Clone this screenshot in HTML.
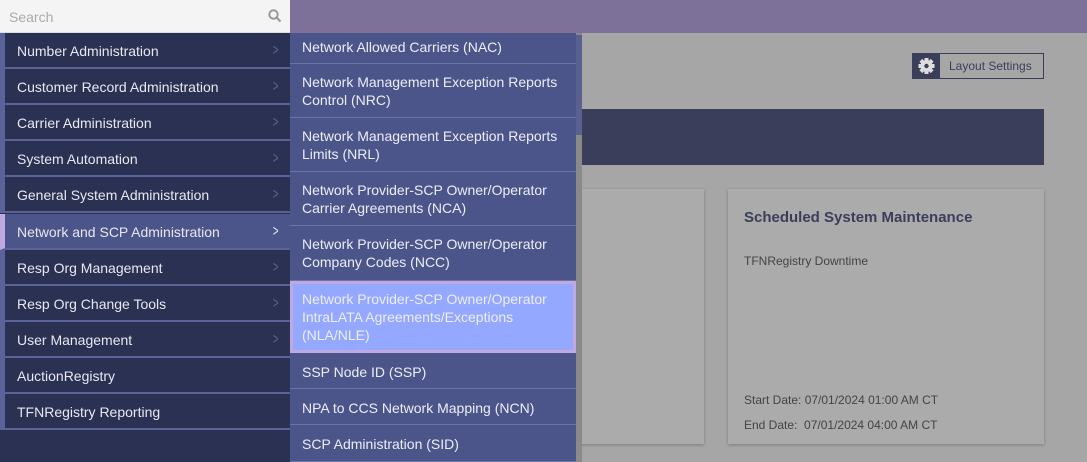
<!DOCTYPE html>
<html><head><style>
*{margin:0;padding:0;box-sizing:border-box}
body{width:1087px;height:462px;overflow:hidden;background:#a6a6a6;font-family:"Liberation Sans",sans-serif;position:relative}
.top{position:absolute;left:290px;top:0;width:797px;height:33px;background:#7e7199}
.search{position:absolute;left:0;top:0;width:290px;height:33px;background:#f4f4f4;border-bottom:1px solid #ddd}
.search span{position:absolute;left:9px;top:9px;font-size:14px;color:#aaa}
.left{position:absolute;left:0;top:33px;width:290px;height:429px;background:#2a3152}
.li{position:absolute;left:0;width:290px;height:36px;border-bottom:2px solid #5a6399;background:#2a3152;border-left:5px solid #5a6399;color:#e8e8f0;font-size:14px;padding:10px 0 0 12px}
.li.act{background:#4b5589;border-left-color:#c0a8e0}
.li i{position:absolute;right:10px;top:9px;font-style:normal;color:#5a6399;font-size:16px;transform:scaleX(.6)}
.li.act i{color:#e8e8f0}
.sub{position:absolute;left:290px;top:33px;width:286px;height:429px;background:#4b5589}
.si{position:absolute;left:0;width:286px;border-bottom:1px solid #6a74a8;color:#eceef6;font-size:14px;line-height:18px;padding:0 12px}
.si.hl{background:#94a8ff;border:3px solid #c0a8e0}
.sb{position:absolute;left:576px;top:33px;width:6px;height:429px;background:#8a8a8a}
.sb div{position:absolute;top:2px;left:0;width:6px;height:100px;background:#5a6090}
.btn{position:absolute;left:912px;top:53px;width:132px;height:26px;border:1px solid #3b3e5a}
.btn .ic{position:absolute;left:0;top:0;width:27px;height:24px;background:#3b3e5a}
.btn span{position:absolute;left:36px;top:5px;font-size:12px;color:#3b3e5a}
.banner{position:absolute;left:582px;top:109px;width:462px;height:56px;background:#3b3e5a}
.card{position:absolute;top:189px;height:255px;background:#ababab;box-shadow:0 1px 3px rgba(0,0,0,.25)}
</style></head><body>
<div class="top"></div>
<div class="banner"></div>
<div class="card" style="left:560px;width:144px"></div>
<div class="card" style="left:728px;width:316px">
<div style="position:absolute;left:16px;top:20px;font-size:15px;font-weight:bold;color:#3b3e5a">Scheduled System Maintenance</div>
<div style="position:absolute;left:16px;top:65px;font-size:12px;color:#444">TFNRegistry Downtime</div>
<div style="position:absolute;left:16px;top:204px;font-size:12px;color:#444">Start Date: 07/01/2024 01:00 AM CT</div>
<div style="position:absolute;left:16px;top:229px;font-size:12px;color:#444">End Date:&nbsp; 07/01/2024 04:00 AM CT</div>
</div>
<div class="btn"><div class="ic"><svg width="27" height="24" viewBox="0 0 27 24"><g fill="#ddd" transform="translate(13.5 12)"><circle r="6"/><rect x="-2" y="-8" width="4" height="16"/><rect x="-8" y="-2" width="16" height="4"/><rect x="-2" y="-8" width="4" height="16" transform="rotate(45)"/><rect x="-2" y="-8" width="4" height="16" transform="rotate(-45)"/></g><circle cx="13.5" cy="12" r="2.2" fill="#3b3e5a"/></svg></div><span>Layout Settings</span></div>
<div class="search"><span>Search</span><svg style="position:absolute;left:268px;top:9px" width="14" height="14" viewBox="0 0 14 14"><circle cx="5.5" cy="5.5" r="4.2" fill="none" stroke="#999" stroke-width="2"/><path d="M8.5 8.5L12.5 12.5" stroke="#999" stroke-width="2.2"/></svg></div>
<div class="left">
<div class="li" style="top:0">Number Administration<i>&gt;</i></div>
<div class="li" style="top:36px">Customer Record Administration<i>&gt;</i></div>
<div class="li" style="top:72px">Carrier Administration<i>&gt;</i></div>
<div class="li" style="top:108px">System Automation<i>&gt;</i></div>
<div class="li" style="top:144px">General System Administration<i>&gt;</i></div>
<div class="li act" style="top:181px">Network and SCP Administration<i>&gt;</i></div>
<div class="li" style="top:217px">Resp Org Management<i>&gt;</i></div>
<div class="li" style="top:253px">Resp Org Change Tools<i>&gt;</i></div>
<div class="li" style="top:289px">User Management<i>&gt;</i></div>
<div class="li" style="top:325px">AuctionRegistry</div>
<div class="li" style="top:361px">TFNRegistry Reporting</div>
</div>
<div class="sub">
<div class="si" style="top:0;height:31px;padding-top:5px">Network Allowed Carriers (NAC)</div>
<div class="si" style="top:31px;height:54px;padding-top:9px">Network Management Exception Reports Control (NRC)</div>
<div class="si" style="top:85px;height:54px;padding-top:9px">Network Management Exception Reports Limits (NRL)</div>
<div class="si" style="top:139px;height:54px;padding-top:9px">Network Provider-SCP Owner/Operator Carrier Agreements (NCA)</div>
<div class="si" style="top:193px;height:55px;padding-top:9px">Network Provider-SCP Owner/Operator Company Codes (NCC)</div>
<div class="si hl" style="top:248px;height:72px;padding-top:6px;padding-left:9px">Network Provider-SCP Owner/Operator IntraLATA Agreements/Exceptions (NLA/NLE)</div>
<div class="si" style="top:320px;height:36px;padding-top:10px">SSP Node ID (SSP)</div>
<div class="si" style="top:356px;height:36px;padding-top:10px">NPA to CCS Network Mapping (NCN)</div>
<div class="si" style="top:392px;height:37px;padding-top:10px">SCP Administration (SID)</div>
</div>
<div class="sb"><div></div></div>
</body></html>
